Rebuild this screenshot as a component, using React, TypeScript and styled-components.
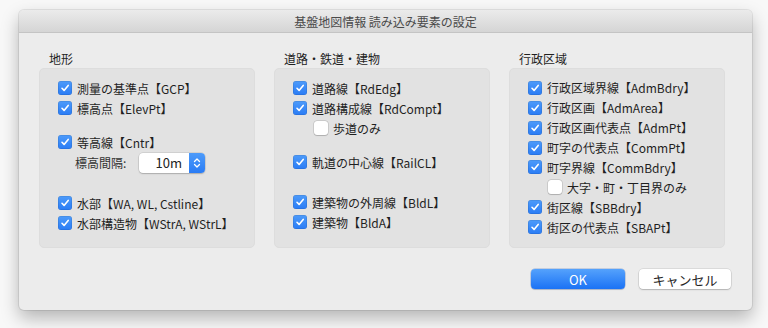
import styled, { createGlobalStyle } from "styled-components";

const GlobalStyle = createGlobalStyle`
  html, body {
    margin: 0;
    padding: 0;
    background: #f8f8f8;
    font-family: "Noto Sans CJK JP", "Noto Sans", sans-serif;
    color: #1f1f1f;
  }
`;

const Page = styled.div`
  width: 768px;
  height: 328px;
  padding: 10px 16px 0 19px;
  box-sizing: border-box;
`;

const Window = styled.div`
  width: 733px;
  height: 300px;
  background: #ececec;
  border-radius: 5px;
  overflow: hidden;
  box-shadow: 0 0 0 1px rgba(0, 0, 0, 0.08), 0 8px 18px rgba(0, 0, 0, 0.28);
  display: flex;
  flex-direction: column;
`;

const TitleBar = styled.div`
  height: 22px;
  flex-shrink: 0;
  background: linear-gradient(#ebebeb, #d5d5d5);
  border-bottom: 1px solid #c4c4c4;
  display: flex;
  align-items: center;
  justify-content: center;
  font-size: 12px;
  color: #4a4a4a;
`;

const Body = styled.div`
  flex: 1;
  padding: 18px 23px 0 20px;
  display: flex;
  flex-direction: column;
`;

const Columns = styled.div`
  display: flex;
  gap: 19px;
`;

const Column = styled.div`
  width: 216px;
  display: flex;
  flex-direction: column;
`;

const Heading = styled.div`
  font-size: 12px;
  line-height: 16px;
  padding-left: 10px;
  margin-bottom: 1px;
`;

const Panel = styled.div`
  height: 180px;
  box-sizing: border-box;
  background: #e2e2e2;
  border-radius: 5px;
  border: 1px solid #dddddd;
  padding: 9px 10px 10px 18px;
  display: flex;
  flex-direction: column;
`;

const Row = styled.label<{ $indent?: number; $gap?: number }>`
  display: flex;
  align-items: center;
  height: 20px;
  font-size: 12px;
  white-space: nowrap;
  margin-left: ${(p) => p.$indent ?? 0}px;
  margin-top: ${(p) => p.$gap ?? 0}px;
`;

const Box = styled.span<{ $on: boolean }>`
  width: 14px;
  height: 14px;
  box-sizing: border-box;
  border-radius: 3px;
  margin-right: 5px;
  flex-shrink: 0;
  display: flex;
  align-items: center;
  justify-content: center;
  background: ${(p) => (p.$on ? "linear-gradient(#4d9bfa, #2a7cf5)" : "#ffffff")};
  box-shadow: ${(p) =>
    p.$on ? "inset 0 0 0 0.5px rgba(0,0,0,0.15)" : "0 0 0 0.5px rgba(0,0,0,0.18), 0 0.5px 1px rgba(0,0,0,0.15)"};
`;

const FieldRow = styled.div`
  display: flex;
  align-items: center;
  height: 21px;
  margin-left: 17px;
  font-size: 12px;
  color: #333;
`;

const FieldLabel = styled.span`
  width: 64px;
`;

const Popup = styled.div`
  width: 66px;
  height: 20px;
  border-radius: 4px;
  background: #ffffff;
  box-shadow: 0 0 0 0.5px rgba(0, 0, 0, 0.15), 0 1px 1.5px rgba(0, 0, 0, 0.18);
  display: flex;
  overflow: hidden;
`;

const PopupValue = styled.span`
  flex: 1;
  display: flex;
  align-items: center;
  justify-content: flex-end;
  padding-right: 7px;
  font-size: 13px;
  color: #222;
`;

const Stepper = styled.span`
  width: 16px;
  background: linear-gradient(#4d9bfa, #2a7cf5);
  display: flex;
  align-items: center;
  justify-content: center;
`;

const Footer = styled.div`
  display: flex;
  justify-content: flex-end;
  gap: 14px;
  margin-top: 21px;
  margin-right: -2px;
`;

const Button = styled.button<{ $primary?: boolean }>`
  width: ${(p) => (p.$primary ? 94 : 92)}px;
  height: 20px;
  border: none;
  border-radius: 4px;
  font-family: inherit;
  font-size: 13px;
  padding: 0;
  color: ${(p) => (p.$primary ? "#ffffff" : "#262626")};
  background: ${(p) => (p.$primary ? "linear-gradient(#55a2fc, #1b72f5)" : "#ffffff")};
  box-shadow: ${(p) =>
    p.$primary
      ? "0 0 0 0.5px rgba(0,60,160,0.35), 0 1px 1px rgba(0,0,0,0.12)"
      : "0 0 0 0.5px rgba(0,0,0,0.14), 0 1px 1.5px rgba(0,0,0,0.18)"};
`;

const Check = () => (
  <svg width="10" height="10" viewBox="0 0 10 10">
    <path d="M2 5.3 L4.1 7.4 L8.2 2.4" fill="none" stroke="#fff" strokeWidth="1.6" strokeLinecap="round" strokeLinejoin="round" />
  </svg>
);

type ItemProps = { text: string; on?: boolean; indent?: number; gap?: number };

const Item = ({ text, on = true, indent, gap }: ItemProps) => (
  <Row $indent={indent} $gap={gap}>
    <Box $on={on}>{on && <Check />}</Box>
    {text}
  </Row>
);

const App = () => {
  return (
    <Page>
      <GlobalStyle />
      <Window>
        <TitleBar>基盤地図情報 読み込み要素の設定</TitleBar>
        <Body>
          <Columns>
            <Column>
              <Heading>地形</Heading>
              <Panel>
                <Item text="測量の基準点【GCP】" />
                <Item text="標高点【ElevPt】" />
                <Item text="等高線【Cntr】" gap={14} />
                <FieldRow>
                  <FieldLabel>標高間隔:</FieldLabel>
                  <Popup>
                    <PopupValue>10m</PopupValue>
                    <Stepper>
                      <svg width="8" height="12" viewBox="0 0 8 12">
                        <path d="M1.5 4.5 L4 2 L6.5 4.5 M1.5 7.5 L4 10 L6.5 7.5" fill="none" stroke="#fff" strokeWidth="1.3" strokeLinecap="round" strokeLinejoin="round" />
                      </svg>
                    </Stepper>
                  </Popup>
                </FieldRow>
                <Item text="水部【WA, WL, Cstline】" gap={20} />
                <Item text="水部構造物【WStrA, WStrL】" />
              </Panel>
            </Column>
            <Column>
              <Heading>道路・鉄道・建物</Heading>
              <Panel>
                <Item text="道路線【RdEdg】" />
                <Item text="道路構成線【RdCompt】" />
                <Item text="歩道のみ" on={false} indent={21} />
                <Item text="軌道の中心線【RailCL】" gap={14} />
                <Item text="建築物の外周線【BldL】" gap={20} />
                <Item text="建築物【BldA】" />
              </Panel>
            </Column>
            <Column>
              <Heading>行政区域</Heading>
              <Panel>
                <Item text="行政区域界線【AdmBdry】" />
                <Item text="行政区画【AdmArea】" />
                <Item text="行政区画代表点【AdmPt】" />
                <Item text="町字の代表点【CommPt】" />
                <Item text="町字界線【CommBdry】" />
                <Item text="大字・町・丁目界のみ" on={false} indent={20} />
                <Item text="街区線【SBBdry】" />
                <Item text="街区の代表点【SBAPt】" />
              </Panel>
            </Column>
          </Columns>
          <Footer>
            <Button $primary>OK</Button>
            <Button>キャンセル</Button>
          </Footer>
        </Body>
      </Window>
    </Page>
  );
};

export default App;
